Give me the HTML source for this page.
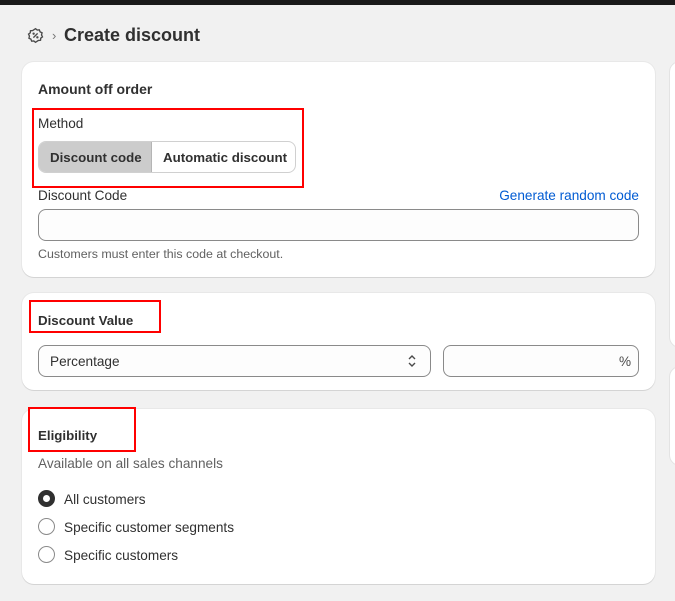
<!DOCTYPE html>
<html><head><meta charset="utf-8"><style>
*{box-sizing:border-box;margin:0;padding:0}
body{width:675px;height:601px;overflow:hidden;background:#f1f1f1;font-family:"Liberation Sans",sans-serif;color:#303030;position:relative;font-size:13.6px}
.top{position:absolute;left:0;top:0;width:675px;height:5px;background:#1a1a1a}
.card{position:absolute;left:22px;width:633px;background:#fff;border-radius:12px;box-shadow:0 1px 0 #d4d4d4,0 0 0 1px #e8e8e8}
.side{position:absolute;left:670px;width:20px;background:#fff;border-radius:10px;box-shadow:0 0 0 1px #e3e3e3}
.t{position:absolute;font-size:13.6px;white-space:nowrap}
.b{font-weight:bold;font-size:13.3px}
.red{position:absolute;border:2px solid #ff0000}
.inp{position:absolute;border:1px solid #8a8a8a;border-radius:8px;background:#fdfdfd}
.rad{position:absolute;width:17px;height:17px;border-radius:50%;border:1px solid #8a8a8a;background:#fff}
</style></head><body>
<div class="top"></div>
<svg style="position:absolute;left:27px;top:27px" width="17" height="17" viewBox="0 0 20 20" fill="none" stroke="#4a4a4a" stroke-width="1.6"><path d="M10 2l2 1.6 2.5-.3.9 2.4 2.3 1.1-.6 2.5 1.1 2.3-2 1.5-.3 2.5-2.5.2L10 18l-2-1.6-2.5.3-.9-2.4-2.3-1.1.6-2.5L1.8 8.4l2-1.5.3-2.5 2.5-.2z"/><path d="M7.5 12.5l5-5"/><circle cx="7.8" cy="7.8" r=".6" fill="#4a4a4a"/><circle cx="12.2" cy="12.2" r=".6" fill="#4a4a4a"/></svg>
<div class="t" style="left:52px;top:28px;color:#777;font-size:13px">›</div>
<div class="t" style="left:64px;top:25px;font-size:18px;font-weight:bold;color:#303030">Create discount</div>

<div class="side" style="top:62px;height:285px"></div>
<div class="side" style="top:367px;height:98px"></div>

<div class="card" style="top:62px;height:215px"></div>
<div class="t b" style="left:38px;top:81px;font-size:14px">Amount off order</div>
<div class="t" style="left:38px;top:116px">Method</div>
<div style="position:absolute;left:38px;top:141px;width:258px;height:32px;border:1px solid #d0d0d0;border-radius:8px;background:#fff;overflow:hidden">
<div style="position:absolute;left:0;top:0;width:113px;height:30px;background:#cccccc;border-right:1px solid #b5b5b5"></div>
<div class="t b" style="left:11px;top:8px">Discount code</div>
<div class="t b" style="left:124px;top:8px">Automatic discount</div>
</div>
<div class="red" style="left:32px;top:108px;width:272px;height:80px"></div>
<div class="t" style="left:38px;top:188px">Discount Code</div>
<div class="t" style="right:36px;top:188px;color:#005bd3">Generate random code</div>
<div class="inp" style="left:38px;top:209px;width:601px;height:32px"></div>
<div class="t" style="left:38px;top:247px;font-size:12.4px;color:#616161">Customers must enter this code at checkout.</div>

<div class="card" style="top:293px;height:97px"></div>
<div class="t b" style="left:38px;top:313px">Discount Value</div>
<div class="red" style="left:29px;top:300px;width:132px;height:33px"></div>
<div class="inp" style="left:38px;top:345px;width:393px;height:32px"></div>
<div class="t" style="left:50px;top:354px">Percentage</div>
<svg style="position:absolute;left:406px;top:353px" width="12" height="16" viewBox="0 0 12 16" fill="none" stroke="#4a4a4a" stroke-width="1.4"><path d="M3 6l3-3 3 3M3 10l3 3 3-3"/></svg>
<div class="inp" style="left:443px;top:345px;width:196px;height:32px"></div>
<div class="t" style="left:619px;top:354px;color:#4a4a4a">%</div>

<div class="card" style="top:409px;height:175px"></div>
<div class="t b" style="left:38px;top:428px">Eligibility</div>
<div class="red" style="left:28px;top:407px;width:108px;height:45px"></div>
<div class="t" style="left:38px;top:456px;color:#616161">Available on all sales channels</div>
<div class="rad" style="left:38px;top:490px;border:5px solid #303030"></div>
<div class="t" style="left:64px;top:492px">All customers</div>
<div class="rad" style="left:38px;top:518px"></div>
<div class="t" style="left:64px;top:520px">Specific customer segments</div>
<div class="rad" style="left:38px;top:546px"></div>
<div class="t" style="left:64px;top:548px">Specific customers</div>
</body></html>
